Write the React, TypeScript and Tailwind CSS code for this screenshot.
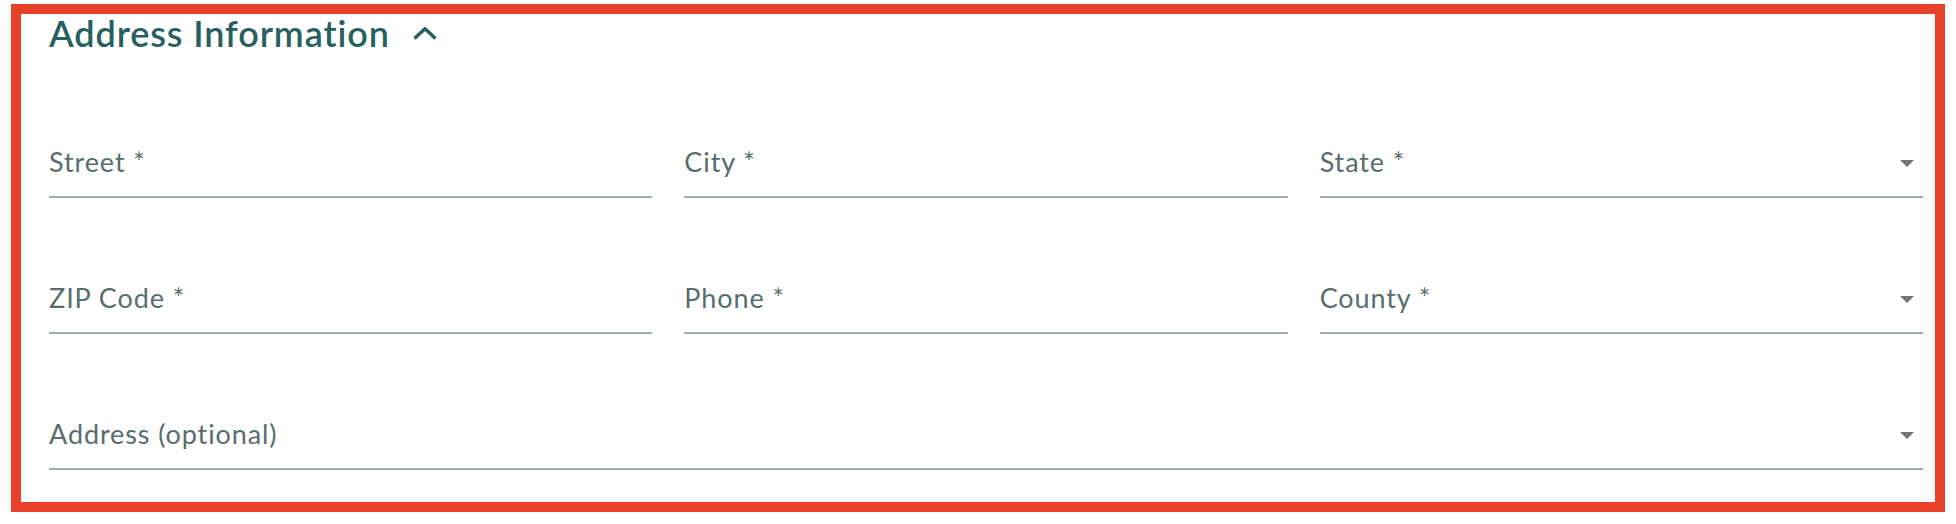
import React from 'react';

const fields = [
  { label: 'Street *' },
  { label: 'City *' },
  { label: 'State *', select: true },
  { label: 'ZIP Code *' },
  { label: 'Phone *' },
  { label: 'County *', select: true },
];

function DropArrow() {
  return (
    <svg width="14" height="7" viewBox="0 0 14 7" className="shrink-0">
      <polygon points="0,0 14,0 7,7" fill="#757575" />
    </svg>
  );
}

function Field({ label, select, wide }: { label: string; select?: boolean; wide?: boolean }) {
  return (
    <div
      className={`flex h-[56px] items-end justify-between border-b-2 border-[#a2acac] pb-[18px] ${wide ? 'col-span-3' : ''}`}
    >
      <span className="text-[27px] leading-[32px] tracking-[0.9px] text-[#586d6d]">{label}</span>
      {select && (
        <span className="mb-[11px] mr-[9px]">
          <DropArrow />
        </span>
      )}
    </div>
  );
}

export default function App() {
  return (
    <div className="h-[524px] w-full bg-white px-[11px] pt-[4px] font-['Lato','Open_Sans',sans-serif]">
      <div className="h-[508px] border-[10px] border-[#e8412a] pl-[28px] pr-[12px]">
        {/* section header */}
        <div className="flex items-center gap-[23px] pt-[1px]">
          <h2 className="text-[36px] font-semibold leading-[36px] tracking-[0.9px] text-[#285f62]">Address Information</h2>
          <svg width="24" height="13" viewBox="0 0 24 13" className="mt-[1px]">
            <polyline points="1.5,11.5 12,1.8 22.5,11.5" fill="none" stroke="#285f62" strokeWidth="3.6" />
          </svg>
        </div>

        <div className="mt-[91px] grid grid-cols-3 gap-x-[32px] gap-y-[80px]">
          {fields.map((f) => (
            <Field key={f.label} label={f.label} select={f.select} />
          ))}
          <Field label="Address (optional)" select wide />
        </div>
      </div>
    </div>
  );
}
